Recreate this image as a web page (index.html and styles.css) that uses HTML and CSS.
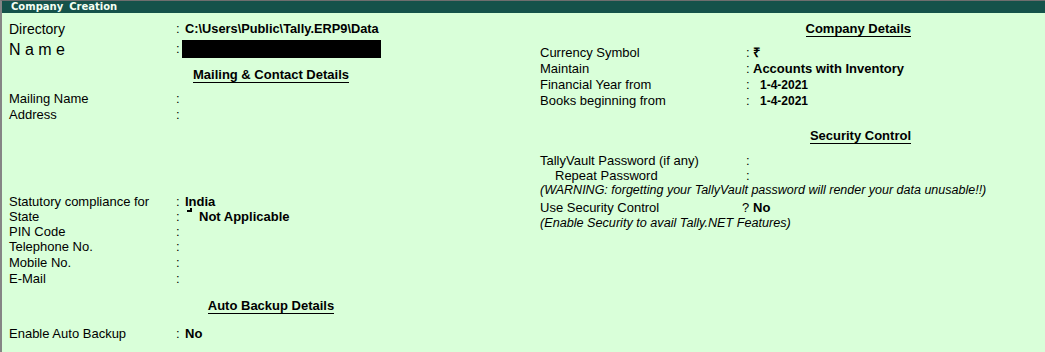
FILE: index.html
```html
<!DOCTYPE html>
<html lang="en">
<head>
<meta charset="utf-8">
<title>Company Creation</title>
<link rel="stylesheet" href="styles.css">
</head>
<body>
<div class="window">
  <div class="titlebar"><span class="title">Company Creation</span></div>
  <div class="content">
    <section class="col col-left">
      <div class="row row-dir"><span class="label lbl-lg">Directory</span><span class="colon">:</span><span class="val v-dir">C:\Users\Public\Tally.ERP9\Data</span></div>
      <div class="row row-name"><span class="label lbl-name">N a m e</span><span class="colon colon-name">:</span><span class="val"><span class="name-box"></span></span></div>
      <div class="heading heading-center mt6"><span>Mailing &amp; Contact Details</span></div>
      <div class="row mt8"><span class="label">Mailing Name</span><span class="colon">:</span><span class="val"></span></div>
      <div class="row"><span class="label">Address</span><span class="colon">:</span><span class="val"></span></div>
      <div class="row h15 mt71"><span class="label">Statutory compliance for</span><span class="colon">:</span><span class="val">India</span></div>
      <div class="row h15"><span class="label">State</span><span class="colon">:</span><span class="val val-state"><span class="corner"></span>Not Applicable</span></div>
      <div class="row h15"><span class="label">PIN Code</span><span class="colon">:</span><span class="val"></span></div>
      <div class="row"><span class="label">Telephone No.</span><span class="colon">:</span><span class="val"></span></div>
      <div class="row"><span class="label">Mobile No.</span><span class="colon">:</span><span class="val"></span></div>
      <div class="row"><span class="label">E-Mail</span><span class="colon">:</span><span class="val"></span></div>
      <div class="heading heading-center mt12"><span>Auto Backup Details</span></div>
      <div class="row mt12"><span class="label">Enable Auto Backup</span><span class="colon">:</span><span class="val">No</span></div>
    </section>
    <section class="col col-right">
      <div class="heading heading-right"><span>Company Details</span></div>
      <div class="row mt8"><span class="label">Currency Symbol</span><span class="colon">:</span><span class="val">₹</span></div>
      <div class="row"><span class="label">Maintain</span><span class="colon">:</span><span class="val">Accounts with Inventory</span></div>
      <div class="row"><span class="label">Financial Year from</span><span class="colon">:</span><span class="val v12 indent">1-4-2021</span></div>
      <div class="row"><span class="label">Books beginning from</span><span class="colon">:</span><span class="val v12 indent">1-4-2021</span></div>
      <div class="heading heading-right mt20"><span>Security Control</span></div>
      <div class="row h15 mt9"><span class="label">TallyVault Password (if any)</span><span class="colon">:</span><span class="val"></span></div>
      <div class="row h15"><span class="label sub">Repeat Password</span><span class="colon">:</span><span class="val"></span></div>
      <div class="note note-warn">(WARNING: forgetting your TallyVault password will render your data unusable!!)</div>
      <div class="row mt2"><span class="label">Use Security Control</span><span class="colon q">?</span><span class="val">No</span></div>
      <div class="note note-net">(Enable Security to avail Tally.NET Features)</div>
    </section>
  </div>
</div>
</body>
</html>
```
FILE: styles.css
```css
* { box-sizing: border-box; }
html, body {
  margin: 0;
  padding: 0;
  width: 1045px;
  height: 352px;
  overflow: hidden;
  background: #d9ffd9;
}
body {
  font-family: "Liberation Sans", Arial, sans-serif;
  font-size: 13px;
  color: #000;
}
.window {
  width: 1045px;
  height: 352px;
  border-top: 1px solid #6e6e6e;
  border-left: 2px solid #858585;
  background: #d9ffd9;
}
.titlebar {
  height: 12px;
  background: #15524a;
  padding-left: 9px;
}
.title {
  font-family: "DejaVu Sans", Verdana, sans-serif;
  font-weight: bold;
  font-size: 10px;
  line-height: 12px;
  color: #f4fff4;
  word-spacing: 2.5px;
  display: block;
}
.content {
  display: grid;
  grid-template-columns: 538px 1fr;
}
.col { display: flex; flex-direction: column; }
.col-left { padding-left: 7px; padding-top: 8px; }
.col-right { padding-top: 9px; }

.row {
  display: grid;
  height: 16px;
  line-height: 16px;
}
.col-left .row { grid-template-columns: 167px 9px 1fr; }
.col-right .row { grid-template-columns: 206px 7px 1fr; }
.row.h15 { height: 15px; line-height: 15px; }

.label { white-space: nowrap; }
.lbl-lg { font-size: 14px; }
.colon { white-space: nowrap; }
.colon.q { margin-left: -4px; }
.val { font-weight: bold; white-space: nowrap; }
.v12 { font-size: 12px; }
.v-dir { font-size: 12.8px; }
.indent { padding-left: 7px; }
.sub { padding-left: 15px; }

.row-name { height: 25px; line-height: 25px; align-items: start; }
.lbl-name { font-size: 16px; }
.colon-name { line-height: 22px; padding-top: 1px; }
.name-box {
  display: block;
  width: 199px;
  height: 18px;
  margin-top: 3px;
  margin-left: -3px;
  background: #000;
}

.val-state { display: flex; align-items: flex-start; }
.corner {
  display: block;
  width: 5px;
  height: 4px;
  margin-top: -1px;
  margin-left: 2px;
  margin-right: 7px;
  border-right: 2px solid #000;
  border-bottom: 2px solid #000;
}

.heading {
  display: flex;
  font-size: 13px;
  font-weight: bold;
  line-height: 13px;
}
.heading span {
  padding-bottom: 1px;
  border-bottom: 1px solid #000;
}
.heading-center { justify-content: center; padding-right: 7px; }
.heading-right { justify-content: flex-end; width: 371px; }

.note {
  font-style: italic;
  line-height: 15px;
  height: 15px;
  white-space: nowrap;
}
.note-warn { font-size: 12.5px; }
.note-net { font-size: 12.65px; }

.mt2 { margin-top: 2px; }
.mt6 { margin-top: 6px; }
.mt8 { margin-top: 8px; }
.mt9 { margin-top: 9px; }
.mt12 { margin-top: 12px; }
.mt20 { margin-top: 20px; }
.mt71 { margin-top: 71px; }
```
